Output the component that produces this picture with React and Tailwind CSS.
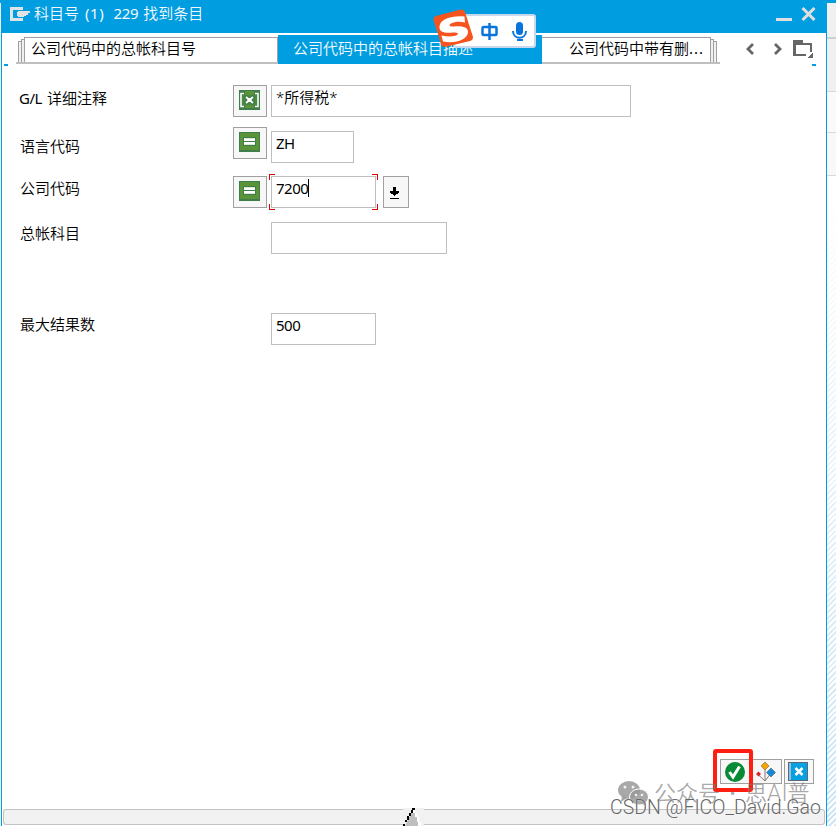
import React, { useState } from 'react';

const tabs = {
  previous: '公司代码中的总帐科目号',
  current: '公司代码中的总帐科目描述',
  next: '公司代码中带有删',
};

const TitleIcon = () => (
  <svg width="20" height="14" viewBox="0 0 20 14" className="shrink-0" shapeRendering="crispEdges">
    <path d="M0 0H13V3H3V11H13V14H0Z" fill="#dfe3e6" />
    <path d="M8 4H20V6H18V8H16V9H14V10H8V9H7V5H8Z" fill="#dfe3e6" />
  </svg>
);

const EqualIcon = () => (
  <svg width="21" height="20" viewBox="0 0 21 20" shapeRendering="crispEdges">
    <rect width="21" height="20" fill="#3f7d4b" />
    <rect x="1" y="1" width="19" height="17" fill="#5b9338" />
    <rect x="4" y="5" width="13" height="9" fill="#3f7d4b" />
    <rect x="5" y="6" width="11" height="3" fill="#fff" />
    <rect x="5" y="10" width="11" height="3" fill="#fff" />
    <rect x="5" y="6" width="11" height="1" fill="#dce8d2" />
    <rect x="5" y="12" width="11" height="1" fill="#dce8d2" />
  </svg>
);

const PatternIcon = () => (
  <svg width="21" height="20" viewBox="0 0 21 20">
    <rect width="21" height="20" fill="#3f7d4b" />
    <rect x="6" y="1" width="9" height="17" fill="#5b9338" />
    <rect x="3" y="5" width="15" height="10" fill="#4d8840" />
    <path d="M5 3.5H2V16.500H5M16 3.500H19V16.500H16" fill="none" stroke="#fff" strokeWidth="1.6" />
    <path d="M6 6L15 14M15 6L6 14" stroke="#3f7d4b" strokeWidth="4" />
    <path d="M7 7L14 13M14 7L7 13" stroke="#fff" strokeWidth="1.8" />
    <rect x="8.500" y="8" width="4" height="4" fill="#fff" />
  </svg>
);

const DownloadArrow = () => (
  <svg width="9" height="12" viewBox="0 0 9 12" shapeRendering="crispEdges">
    <path d="M3 0H6V4H9V6H8V7H6V8H5V9H4V8H3V7H1V6H0V4H3Z" fill="#000" />
    <rect y="11" width="9" height="1" fill="#000" />
  </svg>
);

const OperatorButton = ({ icon }) => (
  <button type="button" className="flex h-8 w-[34px] shrink-0 items-start border border-[#a0a0a0] bg-[#f7f7f7] pt-1 pl-[5px]">
    {icon}
  </button>
);

const Field = ({ value, onChange, className }) => (
  <input
    type="text"
    value={value}
    onChange={(e) => onChange(e.target.value)}
    className={`block h-8 border border-[#bfbfbf] bg-white px-1 font-['Noto_Sans','Noto_Sans_CJK_SC',sans-serif] text-[15px] text-black outline-none ${className}`}
  />
);

const FocusCorners = () => (
  <svg width="109" height="36" viewBox="0 0 109 36" className="pointer-events-none absolute -top-0.5 -left-0.5" fill="none" shapeRendering="crispEdges">
    <path d="M.5 6V.5H6M103 .5H108.500V6M.5 30V35.500H6M103 35.500H108.500V30" stroke="#e00000" />
  </svg>
);

const TitleBar = () => (
  <header className="flex h-[33px] shrink-0 items-start bg-[#009de0] pt-[7px] pl-2 text-[#f0f8fc]">
    <TitleIcon />
    <h1 className="ml-1 -mt-[5px] flex h-[22px] items-center whitespace-pre text-[15px] leading-[22px] font-[350]">
      科目号<span className="ml-[6px] mr-[9px] font-['Noto_Sans'] text-[15px] font-normal tracking-[0.6px]">(1)</span>
      <span className="mr-[5px] font-['Noto_Sans'] text-[15px] font-normal tracking-[-0.3px]">229</span>找到条目
    </h1>
    <svg width="16" height="4" className="mt-[11px] mr-[9px] ml-auto"><rect width="16" height="3" fill="#dfdfdf" /></svg>
    <svg width="15" height="14" viewBox="0 0 15 14" className="mr-2.5" fill="none">
      <path d="M1.500 1L13.500 13M13.500 1L1.500 13" stroke="#dfdfdf" strokeWidth="3" />
    </svg>
  </header>
);

const TabBar = () => (
  <nav className="flex h-[33px] shrink-0 items-start font-[350]">
    <div className="mt-[31px] ml-0.5 h-0.5 w-1 bg-[#009de0]" />
    <div className="ml-2 flex h-[31px] w-[262px] items-end border-b-2 border-[#bfbfbf] pl-0.5">
      <div className="h-[21px] w-[3px] border-t border-l border-[#a0a0a0] bg-[#f0f0f0]" />
      <div className="h-[23px] w-[3px] border-t border-l border-[#a0a0a0] bg-[#f0f0f0]" />
      <button className="flex h-[25px] flex-1 border border-b-0 border-[#a0a0a0] bg-white pl-1.5 leading-[22px]"><span className="-mt-px">{tabs.previous}</span></button>
    </div>
    <button className="mt-0.5 h-[29px] w-[264px] bg-[#009de0] pl-[15px] text-left leading-[26px] text-[#f4fbff]"><span className="block -mt-[3px]">{tabs.current}</span></button>
    <div className="flex h-[31px] w-[178px] items-end border-b-2 border-[#bfbfbf]">
      <button className="flex h-[25px] w-[169px] border-t border-r border-[#a0a0a0] bg-white pl-[27px] leading-[22px]">
        <span className="-mt-px">{tabs.next}</span>
        <span className="-mt-px font-['Noto_Sans'] text-[15px] font-normal tracking-[1px]">...</span>
      </button>
      <div className="h-[23px] w-[3px] border-t border-r border-[#a0a0a0] bg-[#f0f0f0]" />
      <div className="h-[21px] w-[3px] border-t border-r border-[#a0a0a0] bg-[#f0f0f0]" />
    </div>
    <svg width="8" height="12" viewBox="0 0 8 12" className="mt-2.5 ml-[26px]" fill="none" stroke="#666" strokeWidth="2.8"><path d="M7 1L2 6L7 11" /></svg>
    <svg width="8" height="12" viewBox="0 0 8 12" className="mt-2.5 ml-5" fill="none" stroke="#666" strokeWidth="2.8"><path d="M1 1L6 6L1 11" /></svg>
    <svg width="21" height="18" viewBox="0 0 21 18" className="mt-[7px] ml-[11px]" fill="#666" shapeRendering="crispEdges">
      <path fillRule="evenodd" d="M0 0H10V3H19V12H17V5H3V14H13V16H0Z" />
      <path d="M20 13V18H15V17H16V16H17V15H18V14H19V13Z" />
    </svg>
    <div className="mt-[31px] -ml-[2px] h-0.5 w-1 bg-[#009de0]" />
  </nav>
);

const SearchForm = () => {
  const [description, setDescription] = useState('*所得税*');
  const [language, setLanguage] = useState('ZH');
  const [companyCode, setCompanyCode] = useState('7200');
  const [account, setAccount] = useState('');
  const [maxResults, setMaxResults] = useState('500');

  return (
    <form className="flex flex-col pt-[19px] pl-[17px] leading-[22px] font-[350]">
      <div className="flex h-[42px] items-start">
        <label className="flex w-[214px] pt-0.5">
          <span className="font-['Noto_Sans'] text-[15px] font-normal tracking-[-0.5px]">G/L</span>
          <span className="ml-[5px]">详细注释</span>
        </label>
        <OperatorButton icon={<PatternIcon />} />
        <Field value={description} onChange={setDescription} className="ml-1 w-[360px] pb-2.5" />
      </div>
      <div className="flex h-[49px] items-start">
        <label className="w-[214px] pt-2 pl-px">语言代码</label>
        <OperatorButton icon={<EqualIcon />} />
        <Field value={language} onChange={setLanguage} className="mt-1 ml-1 w-[83px] pb-2 font-normal tracking-[-0.5px]" />
      </div>
      <div className="flex h-[46px] items-start">
        <label className="w-[214px] pt-px pl-px">公司代码</label>
        <OperatorButton icon={<EqualIcon />} />
        <div className="relative ml-1 w-[105px]">
          <Field value={companyCode} onChange={setCompanyCode} className="w-full pb-2 font-normal tracking-[-0.5px]" />
          <FocusCorners />
          {/* text cursor */}
          <span className="absolute top-[3px] left-[37px] h-[18px] w-px bg-black" />
        </div>
        <button type="button" className="ml-[7px] flex h-8 w-[26px] justify-center border border-[#a0a0a0] bg-[#f7f7f7] pt-2.5 pr-[3px]">
          <DownloadArrow />
        </button>
      </div>
      <div className="flex h-[91px] items-start">
        <label className="w-[252px] pl-px">总帐科目</label>
        <Field value={account} onChange={setAccount} className="w-44 pb-2" />
      </div>
      <div className="flex items-start">
        <label className="w-[252px] pl-px">最大结果数</label>
        <Field value={maxResults} onChange={setMaxResults} className="w-[105px] pb-2 font-normal tracking-[-0.5px]" />
      </div>
    </form>
  );
};

const Toolbar = () => (
  <div className="mt-auto mb-6 mr-3 flex h-[25px] justify-end">
    <button className="relative flex w-8 items-center justify-center border border-[#a0a0a0] bg-[#f7f7f7]">
      <svg width="20" height="20" viewBox="0 0 20 20" fill="none" className="mr-0.5">
        <circle cx="10" cy="10" r="10" fill="#078a35" />
        <path d="M4.500 10L8 15L14.500 4.500" stroke="#fff" strokeWidth="3" />
      </svg>
      <span className="absolute -top-[11px] -left-2 h-[43px] w-10 rounded-[3px] border-4 border-[#ff1f12]" />
    </button>
    <button className="w-[30px] border border-l-0 border-[#a0a0a0] bg-[#f7f7f7] pl-1">
      <svg width="20" height="20" viewBox="0 0 20 20" fill="none">
        <path d="M9 5V19M2 12.500L9 19L15 11" stroke="#8a7777" />
        <path d="M9 0L13 4L9 8L5 4Z" fill="#f3a600" stroke="#9a7140" strokeWidth=".7" />
        <path d="M15 6L19.500 10.500L15 15L10.500 10.500Z" fill="#168ad6" stroke="#5b7082" strokeWidth=".7" />
        <path d="M2.500 9.500L5 12L2.500 14.500L0 12Z" fill="#d6202b" />
      </svg>
    </button>
    <button className="ml-0.5 flex w-[30px] items-center border border-[#a0a0a0] bg-[#f7f7f7] pl-[3px]">
      <svg width="20" height="19" viewBox="0 0 20 19" fill="none">
        <rect x=".5" y=".5" width="19" height="18" fill="#08a0e2" stroke="#596c76" />
        <rect x="1" y="1" width="2" height="17" fill="#94bde0" />
        <path d="M7.500 6L14.500 13M14.500 6L7.500 13" stroke="#fff" strokeWidth="2.5" />
      </svg>
    </button>
  </div>
);

const StatusBar = () => (
  <footer className="mx-px flex h-[18px] shrink-0 overflow-hidden">
    <div className="mt-px h-4 w-[400px] rounded-l-[3px] border border-r-0 border-[#c3c3c3] bg-[#f2f2f2]" />
    <div className="flex w-[21px] items-start bg-[#f1f1f1]">
      <svg width="21" height="18" viewBox="0 0 21 18" shapeRendering="crispEdges">
        <path d="M10 2L18 18H2Z" fill="#bfbfbf" />
        <path d="M9 0H12V2H10V5H8V8H6V12H4V14H2V18H0V16H2V12H4V8H6V5H8V2H9Z" fill="#000" />
        <path d="M10 2H12V5H14V9H16V14H18V18H15V14H14V9H12V5H10Z" fill="#fff" />
      </svg>
    </div>
    <div className="mt-px h-4 flex-1 rounded-r-[3px] border border-l-0 border-[#c3c3c3] bg-[#f2f2f2]" />
  </footer>
);

// Input method indicator floating over the window
const ImeBar = () => (
  <div className="absolute top-[9px] left-[433px] h-[40px] w-[104px]">
    <div className="absolute top-[5px] left-5 h-[34px] w-[83px] rounded-[3px] border-2 border-[#c8d8ee] bg-white" />
    <svg width="104" height="40" viewBox="0 0 104 40" fill="none" className="absolute top-0 left-0">
      <path d="M3 7L28 .5Q31 0 32 3L40 28Q40 31 37 32L12 38Q9 38 8 35L.500 11Q0 8 3 7Z" fill="#f5541e" />
      <path
        d="M31.500 7.500C18 6.500 8 10 6.500 17C5.500 24 13 24 20 23.500C25 23.300 26 24.500 24 26C20 28 14 27.500 8.500 26.500L10 32.500C22 35 34 31 35 23.500C35.500 17.500 28 17 21 17.500C16 17.800 15.500 16 18 14.500C22 12.500 27 12.500 32 13.500Z"
        fill="#fff"
      />
      <rect x="49.500" y="18" width="14" height="8" rx="1" stroke="#0874dc" strokeWidth="2.500" />
      <path d="M56.500 14V31" stroke="#0874dc" strokeWidth="2.500" />
      <rect x="83" y="13" width="7" height="13" rx="3.500" fill="#0874dc" />
      <path d="M80 22C80 31 93 31 93 22M84 31H90" stroke="#0874dc" strokeWidth="2" />
    </svg>
  </div>
);

const Watermark = () => (
  <div className="pointer-events-none absolute top-[778px] left-[610px] h-12 w-[218px] whitespace-nowrap">
    <svg width="32" height="26" viewBox="0 0 32 26" className="absolute top-[3px] left-2" fill="#999" fillOpacity=".85">
      <ellipse cx="11" cy="9" rx="11" ry="9" />
      <path d="M4 15L3 21L9 17Z" />
      <ellipse cx="21" cy="16" rx="9.500" ry="8" stroke="#fff" strokeWidth="1" />
      <path d="M23 22L28 25L27 20Z" />
      <g fill="#fff"><circle cx="7" cy="6" r="1.500" /><circle cx="15" cy="6" r="1.500" /><circle cx="18" cy="14" r="1.300" /><circle cx="24" cy="14" r="1.300" /></g>
    </svg>
    <p className="absolute top-0 left-11 flex font-['Roboto','Noto_Sans_CJK_SC',sans-serif] text-[22px] leading-[32px] font-[350] text-[#777]/65">
      公众号<span className="w-[25px] text-center font-bold">·</span>思<span className="text-[23px]">AI</span>普
    </p>
    <p className="absolute top-[18px] left-0 font-['Roboto'] text-[19.5px] leading-[24px] font-light text-[#666] [text-shadow:0_0_1px_#fff]">CSDN @FICO_David.Gao</p>
  </div>
);

const App = () => (
  <div className="relative flex h-[826px] w-[836px] overflow-hidden bg-white font-['Noto_Sans_CJK_SC',sans-serif] text-[15px] text-black">
    <div className="w-px border-t-[3px] border-[#009de0] bg-[#edf3f6]" />
    <main className="flex w-[826px] flex-col border-x border-[#009de0]">
      <TitleBar />
      <TabBar />
      <SearchForm />
      <Toolbar />
      <StatusBar />
    </main>
    <aside className="flex w-[9px] flex-col border-t-[3px] border-t-[#009de0]">
      <div className="h-9 border-b-2 border-[#cfcfcf] bg-[#f0f0f0]" />
      <div className="h-[53px] border-b border-[#d8d8d8] bg-[#f0f0f0]" />
      <div className="h-[41px] border-b border-[#d8d8d8] bg-[#fafafa]" />
      <div className="h-[43px] border-b border-[#d8d8d8] bg-[#f8f8f8]" />
      <div className="flex-1 bg-[linear-gradient(to_bottom,white,transparent),repeating-linear-gradient(135deg,#cde6f5_0px,#cde6f5_2px,#ffffff_2px,#ffffff_4px)]" />
    </aside>
    <ImeBar />
    <Watermark />
  </div>
);

export default App;
